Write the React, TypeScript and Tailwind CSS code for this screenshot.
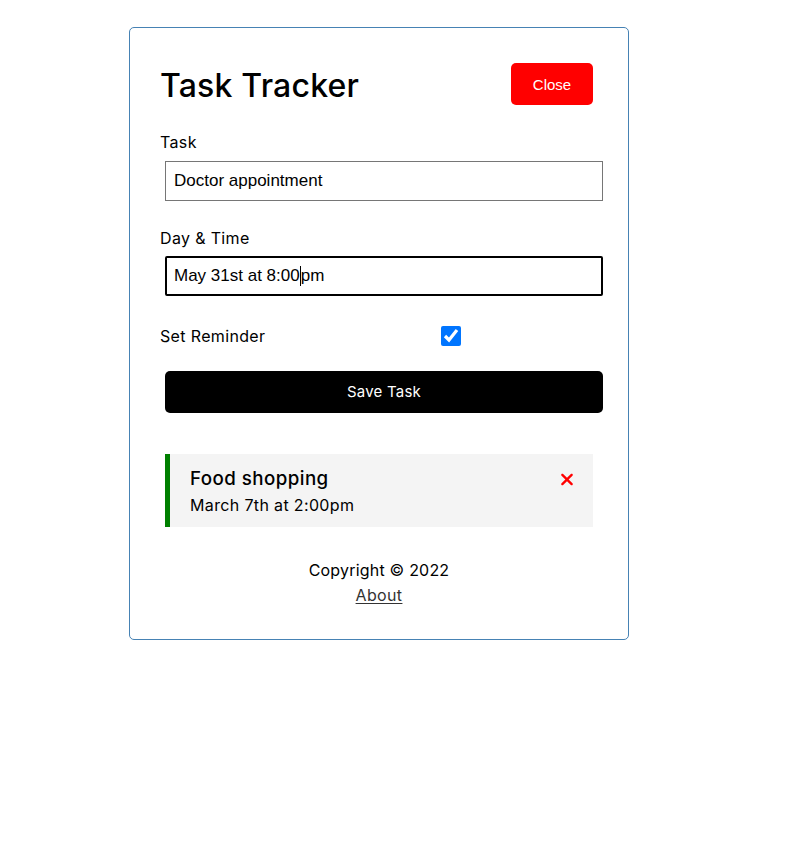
import React from "react";

const poppins = { fontFamily: "Inter, 'Open Sans', sans-serif" };

export default function App() {
  return (
    <div className="min-h-[852px] bg-white pt-[27px]">
      <div
        className="ml-[129px] w-[500px] rounded-[5px] border border-[#4682b4] px-[30px] pt-[30px] pb-[31px] text-black tracking-[0.35px]"
        style={poppins}
      >
        <header className="mb-[20px] flex items-center justify-between">
          <h1 className="pt-[3px] text-[32px] leading-[48px] font-medium tracking-[0.2px]">Task Tracker</h1>
          <button
            className="my-[5px] mr-[5px] h-[42px] w-[82px] rounded-[5px] bg-[#ff0000] pt-[2px] text-[15px] tracking-normal text-white"
            style={{ fontFamily: "'Liberation Sans', Arial, sans-serif" }}
          >
            Close
          </button>
        </header>

        <form>
          <div>
            <label className="block text-[16px] leading-[24px]">Task</label>
            <input
              type="text"
              defaultValue="Doctor appointment"
              className="mt-[7px] ml-[5px] block h-[40px] w-[438px] border border-[#767676] px-[8px] text-[17px] tracking-normal text-black outline-none"
              style={{ fontFamily: "'Liberation Sans', Arial, sans-serif" }}
            />
          </div>
          <div className="mt-[25px]">
            <label className="block text-[16px] leading-[24px]">Day &amp; Time</label>
            <div className="mt-[6px] ml-[5px] flex h-[40px] w-[438px] items-center rounded-[2px] border-2 border-black px-[7px] text-[17px] tracking-normal text-black"
              style={{ fontFamily: "'Liberation Sans', Arial, sans-serif" }}
            >
              <span>May 31st at 8:00</span>
              <span className="h-[20px] w-px bg-black" />
              <span>pm</span>
            </div>
          </div>
          <div className="mt-[28px] flex h-[24px] items-center">
            <label className="w-[146px] text-[16px] leading-[24px]">Set Reminder</label>
            <div className="flex flex-1 justify-center pr-[3px]">
              <input type="checkbox" defaultChecked className="h-[20px] w-[20px] accent-[#0075ff]" />
            </div>
          </div>
          <button
            type="button"
            className="mt-[23px] ml-[5px] block h-[42px] w-[438px] rounded-[5px] bg-black text-[15px] tracking-[0.2px] text-white"
          >
            Save Task
          </button>
        </form>

        <div className="mt-[41px] ml-[5px] w-[428px] border-l-[5px] border-[#008000] bg-[#f4f4f4] px-[20px] py-[10px]">
          <h3 className="flex h-[29px] items-center justify-between pt-[1px] text-[18.72px] leading-[28px] font-medium tracking-[0.45px]">
            Food shopping
            <svg width="14" height="19" viewBox="0 0 384 512" fill="#ff0000" className="mr-[-1px]">
              <path d="M342.6 150.6c12.5-12.5 12.5-32.8 0-45.3s-32.8-12.5-45.3 0L192 210.7 86.6 105.4c-12.5-12.5-32.8-12.5-45.3 0s-12.5 32.8 0 45.3L146.7 256 41.4 361.4c-12.5 12.5-12.5 32.8 0 45.3s32.8 12.5 45.3 0L192 301.3 297.4 406.6c12.5 12.5 32.8 12.5 45.3 0s12.5-32.8 0-45.3L237.3 256 342.6 150.6z" />
            </svg>
          </h3>
          <p className="text-[16px] leading-[24px]">March 7th at 2:00pm</p>
        </div>

        <footer className="mt-[31px] text-center text-[16px] leading-[25px]">
          <p className="tracking-[0.2px]">Copyright © 2022</p>
          <a href="#" className="text-[#333] underline underline-offset-2">About</a>
        </footer>
      </div>
    </div>
  );
}
